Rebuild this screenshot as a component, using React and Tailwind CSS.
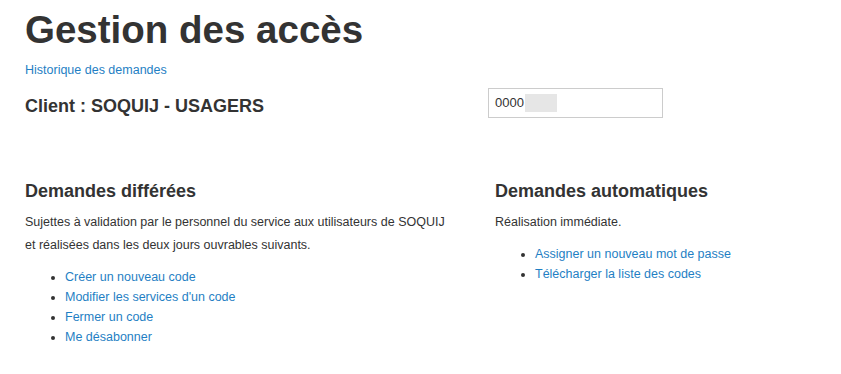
export default function App() {
  const link = "text-[#1f7fc4] hover:underline";
  return (
    <div className="min-h-[374px] bg-white px-[25px] pt-[8px] font-['Liberation_Sans',Arial,sans-serif] text-[#333]">
      <h1 className="text-[38.5px] font-bold leading-[44px]">Gestion des accès</h1>
      <a href="#" className={`mt-[9px] block text-[12.5px] leading-[18px] ${link}`}>Historique des demandes</a>

      <div className="mt-[2px] grid grid-cols-[463px_1fr] items-start">
        <h2 className="pt-[15px] text-[18px] font-bold leading-[20px]">Client : SOQUIJ - USAGERS</h2>
        <div className="mt-[7px] flex h-[30px] w-[175px] items-center border border-[#ccc] px-[6px] text-[13px]">
          0000<span className="ml-[1px] inline-block h-[18px] w-[32px] bg-[#e6e6e6]" />
        </div>
      </div>

      <div className="mt-[62px] grid grid-cols-[470px_1fr]">
        <section>
          <h3 className="text-[18px] font-bold leading-[22px]">Demandes différées</h3>
          <p className="mt-[9px] text-[12.5px] leading-[23px]">
            Sujettes à validation par le personnel du service aux utilisateurs de SOQUIJ
            <br />
            et réalisées dans les deux jours ouvrables suivants.
          </p>
          <ul className="mt-[10px] list-disc pl-[40px] text-[12.5px] leading-[20px]">
            <li><a href="#" className={link}>Créer un nouveau code</a></li>
            <li><a href="#" className={link}>Modifier les services d'un code</a></li>
            <li><a href="#" className={link}>Fermer un code</a></li>
            <li><a href="#" className={link}>Me désabonner</a></li>
          </ul>
        </section>
        <section>
          <h3 className="text-[18px] font-bold leading-[22px]">Demandes automatiques</h3>
          <p className="mt-[9px] text-[12.5px] leading-[23px]">Réalisation immédiate.</p>
          <ul className="mt-[10px] list-disc pl-[40px] text-[12.5px] leading-[20px]">
            <li><a href="#" className={link}>Assigner un nouveau mot de passe</a></li>
            <li><a href="#" className={link}>Télécharger la liste des codes</a></li>
          </ul>
        </section>
      </div>
    </div>
  );
}
